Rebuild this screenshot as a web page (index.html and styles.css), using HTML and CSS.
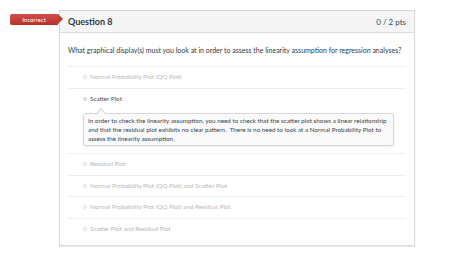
FILE: index.html
```html
<!DOCTYPE html>
<html>
<head>
<meta charset="utf-8">
<link rel="stylesheet" href="styles.css">
</head>
<body>
<div class="page">
  <div class="badge">Incorrect</div>
  <div class="card">
    <div class="card-header">
      <span class="title">Question 8</span>
      <span class="pts">0 / 2 pts</span>
    </div>
    <div class="card-body">
      <p class="question">What graphical display(s) must you look at in order to assess the linearity assumption for regression analyses?</p>
      <div class="answers">
        <div class="answer muted"><span class="radio"></span>Normal Probability Plot (QQ Plot)</div>
        <div class="answer selected">
          <div class="answer-line"><span class="radio checked"></span>Scatter Plot</div>
          <div class="comment">In order to check the linearity assumption, you need to check that the scatter plot shows a linear relationship and that the residual plot exhibits no clear pattern.&nbsp; There is no need to look at a Normal Probability Plot to assess the linearity assumption.</div>
        </div>
        <div class="answer muted"><span class="radio"></span>Residual Plot</div>
        <div class="answer muted"><span class="radio"></span>Normal Probability Plot (QQ Plot) and Scatter Plot</div>
        <div class="answer muted"><span class="radio"></span>Normal Probability Plot (QQ Plot) and Residual Plot</div>
        <div class="answer muted last"><span class="radio"></span>Scatter Plot and Residual Plot</div>
      </div>
    </div>
  </div>
</div>
</body>
</html>
```
FILE: styles.css
```css
html, body {
  margin: 0;
  padding: 0;
  background: #ffffff;
}
body {
  font-family: Lato, "Liberation Sans", sans-serif;
  color: #2d3b45;
}
.page {
  position: relative;
  width: 474px;
  height: 258px;
  padding: 10px 0 0 59px;
  box-sizing: border-box;
}
.badge {
  position: absolute;
  left: 10px;
  top: 14px;
  width: 48px;
  height: 11px;
  background: linear-gradient(#d2504a, #b8302a);
  color: #fff;
  font-size: 6px;
  line-height: 11px;
  text-align: center;
  border-radius: 2px 0 0 2px;
}
.badge::after {
  content: "";
  position: absolute;
  right: -5px;
  top: 0;
  border-left: 5px solid #c03a33;
  border-top: 5.5px solid transparent;
  border-bottom: 5.5px solid transparent;
}
.card {
  width: 354px;
  border: 1px solid #d8d8d8;
  box-shadow: 0 1px 1px rgba(0,0,0,0.08);
  background: #fff;
}
.card-header {
  display: flex;
  justify-content: space-between;
  align-items: center;
  height: 21px;
  padding: 0 8px;
  background: #f5f5f5;
  border-bottom: 1px solid #dcdcdc;
}
.title {
  font-weight: 700;
  font-size: 9px;
  color: #2d3b45;
}
.pts {
  font-size: 8px;
  color: #3a4750;
}
.card-body {
  padding: 12px 8px 6px 8px;
}
.question {
  margin: 0;
  font-size: 7px;
  line-height: 10px;
  color: #2d3b45;
  padding-bottom: 11px;
  border-bottom: 1px solid #eeeeee;
}
.answers {
  display: flex;
  flex-direction: column;
}
.answer {
  font-size: 6.3px;
  line-height: 8.5px;
  padding: 6px 0 6px 15px;
  border-bottom: 1px solid #eeeeee;
  display: flex;
  align-items: center;
}
.answer.last {
  border-bottom: none;
}
.answer.muted {
  color: #b4b9bd;
}
.answer.selected {
  flex-direction: column;
  align-items: stretch;
  color: #4a555d;
  padding-bottom: 7px;
}
.answer-line {
  display: flex;
  align-items: center;
}
.radio {
  width: 4px;
  height: 4px;
  border: 0.8px solid #dde0e2;
  border-radius: 50%;
  margin-right: 3px;
  box-sizing: border-box;
  flex: none;
}
.radio.checked {
  border-color: #c4c9cc;
  background: radial-gradient(circle, #8b939a 45%, #fff 50%);
}
.comment {
  position: relative;
  margin-top: 10px;
  width: 311px;
  box-sizing: border-box;
  border: 1px solid #d4d8db;
  border-radius: 3px;
  background: #fafafa;
  box-shadow: 0 1px 2px rgba(0,0,0,0.08);
  padding: 1.5px 4px 2.5px 4px;
  font-size: 6.3px;
  line-height: 9px;
  color: #38454e;
}
.comment::before {
  content: "";
  position: absolute;
  left: 13px;
  top: -4.5px;
  width: 7px;
  height: 7px;
  background: #fafafa;
  border-left: 1px solid #d4d8db;
  border-top: 1px solid #d4d8db;
  transform: rotate(45deg);
}
```
